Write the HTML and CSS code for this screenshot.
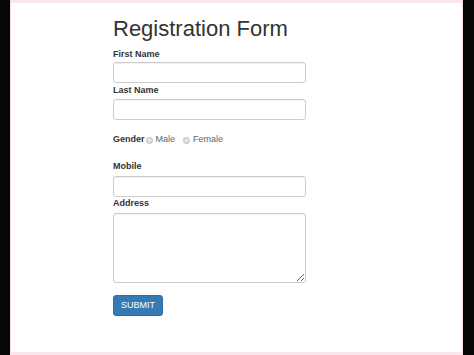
FILE: index.html
```html
<!DOCTYPE html>
<html>
<head>
<meta charset="utf-8">
<link rel="stylesheet" href="styles.css">
</head>
<body>
<div class="frame">
  <div class="bar"></div>
  <main class="page">
    <form class="form">
      <h1 class="title">Registration Form</h1>
      <label class="label l-first">First Name</label>
      <input class="input" type="text">
      <label class="label l-last">Last Name</label>
      <input class="input i-last" type="text">
      <div class="gender">
        <span class="label-inline">Gender</span>
        <input class="radio r1" type="radio" name="g">
        <span class="opt">Male</span>
        <input class="radio r2" type="radio" name="g">
        <span class="opt">Female</span>
      </div>
      <label class="label l-mobile">Mobile</label>
      <input class="input" type="text">
      <label class="label l-address">Address</label>
      <textarea class="textarea"></textarea>
      <button class="submit" type="button">SUBMIT</button>
    </form>
  </main>
  <div class="bar bar-right"></div>
</div>
</body>
</html>
```

FILE: styles.css
```css
html, body {
  margin: 0;
  padding: 0;
  background: #000;
}
.frame {
  display: flex;
  width: 474px;
  height: 355px;
}
.bar {
  width: 10px;
  background: #060606;
  flex: none;
}
.bar-right {
  width: 11px;
}
.page {
  flex: 1;
  background: #fff;
  border-top: 3px solid #fbe6eb;
  border-bottom: 3px solid #fbe6eb;
  border-left: 1px solid #f6dde3;
  border-right: 1px solid #f6dde3;
  font-family: "Liberation Sans", Arial, sans-serif;
  color: #333;
  padding-left: 102px;
}
.form {
  display: flex;
  flex-direction: column;
  align-items: flex-start;
  width: 193px;
}
.title {
  margin: 13px 0 0 0;
  font-size: 22px;
  line-height: 26px;
  font-weight: normal;
  color: #333;
}
.label {
  font-size: 9px;
  line-height: 12px;
  font-weight: bold;
  color: #333;
}
.l-first { margin: 6px 0 2px; }
.l-last { margin: 1px 0 3px; }
.l-mobile { margin: 15px 0 4px; }
.l-address { margin: 0 0 4px; }
.input {
  box-sizing: border-box;
  width: 193px;
  height: 21px;
  margin: 0;
  border: 1px solid #ccc;
  border-radius: 3px;
  box-shadow: inset 0 1px 1px rgba(0,0,0,0.06);
  background: #fff;
}
.gender {
  display: flex;
  align-items: center;
  margin-top: 13px;
  height: 12px;
  font-size: 9px;
  line-height: 12px;
}
.label-inline {
  font-weight: bold;
  color: #333;
}
.radio {
  appearance: none;
  -webkit-appearance: none;
  box-sizing: border-box;
  width: 7px;
  height: 7px;
  margin: 2px 0 0 0;
  border-radius: 50%;
  border: 1px solid #bdbdbd;
  background: radial-gradient(circle at 50% 40%, #eee, #d2d2d2);
}
.r1 { margin-left: 1px; }
.r2 { margin-left: 8px; }
.opt {
  color: #666;
  margin-left: 3px;
}
.textarea {
  box-sizing: border-box;
  width: 193px;
  height: 70px;
  margin: 0;
  border: 1px solid #ccc;
  border-radius: 3px;
  box-shadow: inset 0 1px 1px rgba(0,0,0,0.06);
  resize: both;
  background: #fff;
}
.submit {
  margin-top: 12px;
  height: 21px;
  padding: 0 7px;
  border: 1px solid #2e6da4;
  border-radius: 3px;
  background: #337ab7;
  color: #fff;
  font-family: "Liberation Sans", Arial, sans-serif;
  font-size: 9px;
  line-height: 19px;
}
```
